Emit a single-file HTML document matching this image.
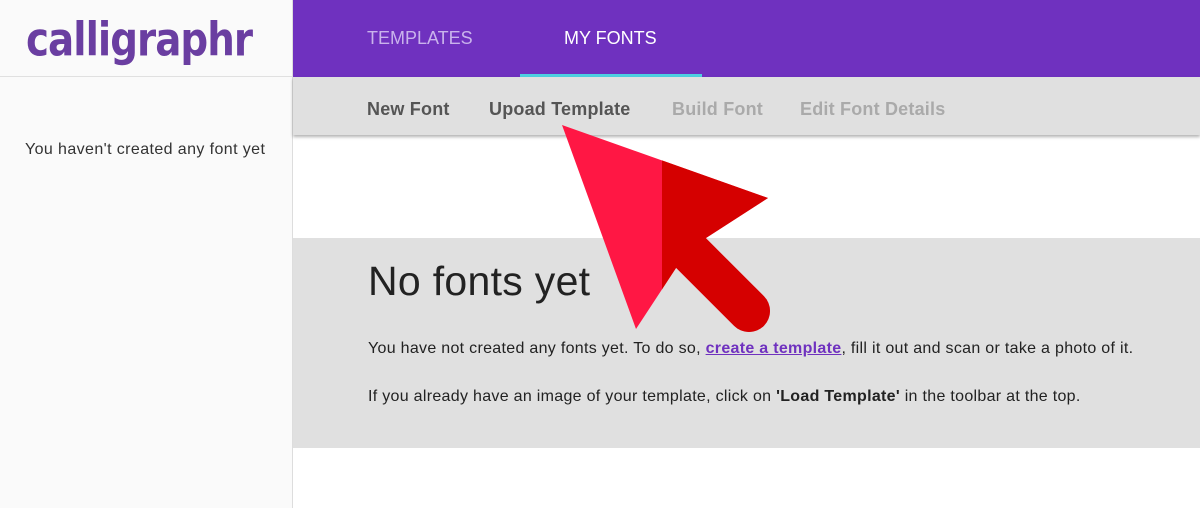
<!DOCTYPE html>
<html><head><style>
body{margin:0;width:1200px;height:508px;overflow:hidden;font-family:"Liberation Sans",Arial,sans-serif;background:#fff;position:relative}
.side{position:absolute;left:0;top:0;width:292px;height:508px;background:#fafafa;border-right:1px solid #ddd}
.logo{position:absolute;left:0;top:0;width:292px;height:76px;border-bottom:1px solid #e0e0e0;overflow:hidden}
.logo span{position:absolute;left:26px;top:14px;font:900 40px "DejaVu Sans",sans-serif;color:#6a3ea1;letter-spacing:-1px;transform:scaleX(0.97) scaleY(1.15);transform-origin:left top;white-space:nowrap}
.side p{position:absolute;left:25px;top:141px;margin:0;font-size:16px;color:#333;letter-spacing:0.4px}
.top{position:absolute;left:293px;top:0;right:0;height:77px;background:#6f31bf}
.tab{position:absolute;top:28px;font-size:18px;color:#c9b3ec}
.ul{position:absolute;left:520px;top:74px;width:182px;height:3px;background:#4dd0e1}
.sub{position:absolute;left:293px;top:77px;right:0;height:58px;background:#e0e0e0;box-shadow:0 2px 3px rgba(0,0,0,.3)}
.panel{position:absolute;left:293px;top:238px;right:0;height:210px;background:#e0e0e0}
h1{position:absolute;left:368px;top:258px;margin:0;font-weight:normal;font-size:41px;color:#222;letter-spacing:0.3px}
.t{position:absolute;left:368px;font-size:16px;color:#222;margin:0;letter-spacing:0.3px;white-space:nowrap}
a{color:#6f31bf;font-weight:bold;text-decoration:underline}
.s{position:absolute;top:99px;font-size:18px;font-weight:bold;letter-spacing:0.2px}
</style></head><body>
<div class="side"><div class="logo"><span>calligraphr</span></div><p>You haven't created any font yet</p></div>
<div class="top"></div>
<div class="tab" style="left:367px">TEMPLATES</div>
<div class="tab" style="left:564px;color:#fff">MY FONTS</div>
<div class="ul"></div>
<div class="sub"></div>
<span class="s" style="left:367px;color:#555">New Font</span>
<span class="s" style="left:489px;color:#555">Upoad Template</span>
<span class="s" style="left:672px;color:#aaa">Build Font</span>
<span class="s" style="left:800px;color:#aaa">Edit Font Details</span>
<div class="panel"></div>
<h1>No fonts yet</h1>
<p class="t" style="top:340px">You have not created any fonts yet. To do so, <a>create a template</a>, fill it out and scan or take a photo of it.</p>
<p class="t" style="top:388px">If you already have an image of your template, click on <b>'Load Template'</b> in the toolbar at the top.</p>
<svg style="position:absolute;left:0;top:0" width="1200" height="508">
<defs><clipPath id="r"><rect x="662" y="0" width="300" height="508"/></clipPath></defs>
<g fill="#ff1744" stroke="#ff1744">
<polygon points="562,125 768,198 706,238 676,268 636,329" stroke="none"/>
<line x1="691" y1="253" x2="749" y2="311" stroke-width="42" stroke-linecap="round"/>
</g>
<g clip-path="url(#r)" fill="#d50000" stroke="#d50000">
<polygon points="562,125 768,198 706,238 676,268 636,329" stroke="none"/>
<line x1="691" y1="253" x2="749" y2="311" stroke-width="42" stroke-linecap="round"/>
</g>
</svg>
</body></html>
